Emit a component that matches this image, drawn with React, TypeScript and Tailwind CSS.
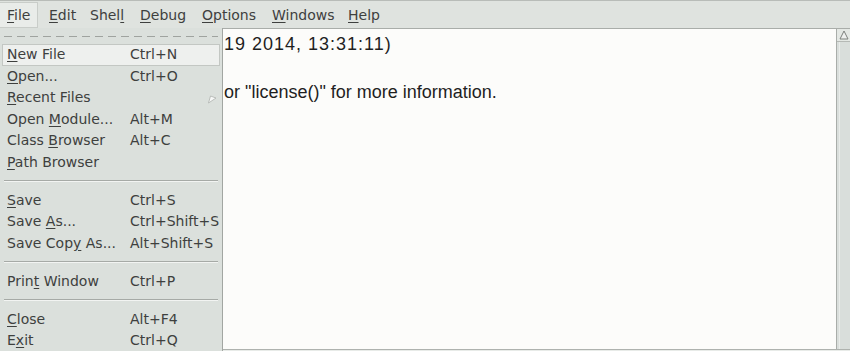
import React from "react";

type Item =
  | { kind: "item"; pre: string; u: string; post: string; sc?: string; active?: boolean; sub?: boolean }
  | { kind: "sep" };

const items: Item[] = [
  { kind: "item", pre: "", u: "N", post: "ew File", sc: "Ctrl+N", active: true },
  { kind: "item", pre: "", u: "O", post: "pen...", sc: "Ctrl+O" },
  { kind: "item", pre: "", u: "R", post: "ecent Files", sub: true },
  { kind: "item", pre: "Open ", u: "M", post: "odule...", sc: "Alt+M" },
  { kind: "item", pre: "Class ", u: "B", post: "rowser", sc: "Alt+C" },
  { kind: "item", pre: "", u: "P", post: "ath Browser" },
  { kind: "sep" },
  { kind: "item", pre: "", u: "S", post: "ave", sc: "Ctrl+S" },
  { kind: "item", pre: "Save ", u: "A", post: "s...", sc: "Ctrl+Shift+S" },
  { kind: "item", pre: "Save Cop", u: "y", post: " As...", sc: "Alt+Shift+S" },
  { kind: "sep" },
  { kind: "item", pre: "Prin", u: "t", post: " Window", sc: "Ctrl+P" },
  { kind: "sep" },
  { kind: "item", pre: "", u: "C", post: "lose", sc: "Alt+F4" },
  { kind: "item", pre: "E", u: "x", post: "it", sc: "Ctrl+Q" },
];

const bar: { pre: string; u: string; post: string; w: string }[] = [
  { pre: "", u: "F", post: "ile", w: "w-[42px]" },
  { pre: "", u: "E", post: "dit", w: "w-[41px]" },
  { pre: "Shel", u: "l", post: "", w: "w-[50px]" },
  { pre: "", u: "D", post: "ebug", w: "w-[62px]" },
  { pre: "", u: "O", post: "ptions", w: "w-[70px]" },
  { pre: "", u: "W", post: "indows", w: "w-[76px]" },
  { pre: "", u: "H", post: "elp", w: "w-[60px]" },
];

function Line({ prefix, text, track }: { prefix: string; text: string; track?: boolean }) {
  return (
    <div className="flex h-[24px] items-center whitespace-nowrap">
      <span className="flex w-[224px] shrink-0 justify-end overflow-hidden">
        <span className="whitespace-pre">{prefix}</span>
      </span>
      <span className={"whitespace-pre " + (track ? "tracking-[1px]" : "")}>{text}</span>
    </div>
  );
}

export default function App() {
  return (
    <div className="relative h-[351px] w-[850px] overflow-hidden bg-[#dfe3df] font-['DejaVu_Sans',sans-serif] text-[14px] text-[#3e403e]">
      {/* menu bar */}
      <div className="flex h-[28px] items-start border-t border-[#b8bcb8] pt-[1px]">
        {bar.map((b, i) => (
          <div key={i} className={"flex h-[26px] shrink-0 " + b.w}>
            <div
              className={
                "flex h-[26px] items-center pl-[7px] " +
                (i === 0 ? "w-[38px] border border-l-0 border-[#c9cdc9] bg-[#e9ece9]" : "")
              }
            >
              <span>
                {b.pre}
                <span className="underline decoration-1 underline-offset-2">{b.u}</span>
                {b.post}
              </span>
            </div>
          </div>
        ))}
      </div>

      {/* body */}
      <div className="flex h-[321px]">
        <div className="flex-1 border-t border-[#a9ada9] bg-[#fcfcfa] pt-[3px] font-['Liberation_Sans',Arial,sans-serif] text-[18px] text-[#1f1f1f]">
          <Line prefix="Python 3.4.1 (default, May " text="19 2014, 13:31:11)" track />
          <div className="flex h-[24px] items-center whitespace-nowrap pl-[6px]">[GCC 4.8.2] on linux</div>
          <Line prefix={'Type "copyright", "credits" '} text={'or "license()" for more information.'} />
        </div>
        <div className="flex w-[14px] flex-col border-l border-t border-[#a9ada9] bg-[#d9dedb]">
          <div className="flex h-[13px] items-center justify-center border-b border-[#b5b9b5] bg-[#e4e8e4]">
            <svg width="10" height="10" viewBox="0 0 10 10">
              <path d="M5 1 L9 9 L1 9 Z" fill="#eef0ee" stroke="#7d817d" strokeWidth="1" />
            </svg>
          </div>
          <div className="ml-[2px] flex-1 border-l border-[#e9ece9]" />
        </div>
      </div>
      <div className="h-[2px] border-t border-[#aeb2ae] bg-[#e8ebe8]" />

      {/* File menu dropdown */}
      <div className="absolute left-0 top-[28px] h-[323px] w-[223px] border-r border-[#a2a6a2] bg-[#dbe0dc] px-[2px]">
        <div className="flex h-[16px] items-center pl-[2px] pr-[2px]">
          <div className="h-[1px] w-full bg-[repeating-linear-gradient(90deg,#9fa39f_0_8px,transparent_8px_13px)]" />
        </div>
        {items.map((it, i) =>
          it.kind === "sep" ? (
            <div key={i} className="flex h-[16.5px] items-center px-[2px]">
              <div className="h-[2px] w-full border-t border-[#a6aaa6] border-b border-b-[#f2f4f2]" />
            </div>
          ) : (
            <div
              key={i}
              className={
                "relative flex h-[21.5px] items-center whitespace-nowrap " +
                (it.active ? "border border-[#c3c7c3] bg-[#eef0ee]" : "border border-transparent")
              }
            >
              <span className="w-[127px] shrink-0 pl-[4px]">
                {it.pre}
                <span className="underline decoration-1 underline-offset-2">{it.u}</span>
                {it.post}
              </span>
              {it.sc && <span>{it.sc}</span>}
              {it.sub && (
                <svg className="absolute right-[2px] top-[5px]" width="10" height="11" viewBox="0 0 10 11">
                  <path d="M1.5 10 L9 5 L3.5 3 Z" fill="#f7f8f7" stroke="#aeb2ae" strokeWidth="0.8" />
                </svg>
              )}
            </div>
          )
        )}
      </div>
    </div>
  );
}
